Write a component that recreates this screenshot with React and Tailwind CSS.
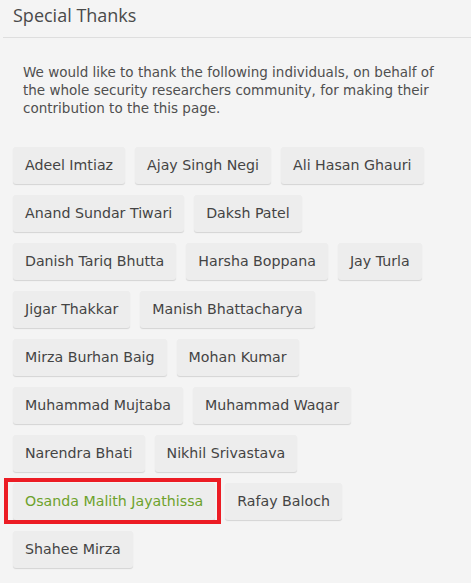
const names = [
  'Adeel Imtiaz',
  'Ajay Singh Negi',
  'Ali Hasan Ghauri',
  'Anand Sundar Tiwari',
  'Daksh Patel',
  'Danish Tariq Bhutta',
  'Harsha Boppana',
  'Jay Turla',
  'Jigar Thakkar',
  'Manish Bhattacharya',
  'Mirza Burhan Baig',
  'Mohan Kumar',
  'Muhammad Mujtaba',
  'Muhammad Waqar',
  'Narendra Bhati',
  'Nikhil Srivastava',
  'Osanda Malith Jayathissa',
  'Rafay Baloch',
  'Shahee Mirza',
]

const highlighted = 'Osanda Malith Jayathissa'

function NameTag({ name }) {
  const active = name === highlighted
  return (
    <div className="relative">
      <span
        className={`flex items-center h-[37px] px-[12px] rounded-[3px] bg-[#ededed] shadow-[0_1px_1px_#d4d4d4] text-[14.2px] whitespace-nowrap ${
          active ? 'text-[#6da22c]' : 'text-[#444]'
        }`}
      >
        {name}
      </span>
      {active && (
        <div className="absolute left-[-9px] top-[-5px] right-[-6px] bottom-[-4px] border-[4px] border-[#ec1c24] pointer-events-none" />
      )}
    </div>
  )
}

export default function App() {
  return (
    <div className="w-[471px] h-[583px] overflow-hidden bg-[#f4f4f4] pl-[3px] font-['DejaVu_Sans',sans-serif]">
      <div className="h-[38px] pl-[10px] pt-[1px] border-b border-[#dedede]">
        <h2 className="text-[18px] leading-[28px] text-[#4a4a4a] font-['Open_Sans',sans-serif]">
          Special Thanks
        </h2>
      </div>

      <div className="pl-[10px] pr-[16px]">
        <p className="pl-[10px] pt-[25px] text-[13.5px] leading-[18px] text-[#4f4f4f]">
          We would like to thank the following individuals, on behalf of the whole security
          researchers community, for making their contribution to the this page.
        </p>

        <div className="mt-[30px] flex flex-wrap gap-x-[10px] gap-y-[11px]">
          {names.map(n => (
            <NameTag key={n} name={n} />
          ))}
        </div>
      </div>
    </div>
  )
}
